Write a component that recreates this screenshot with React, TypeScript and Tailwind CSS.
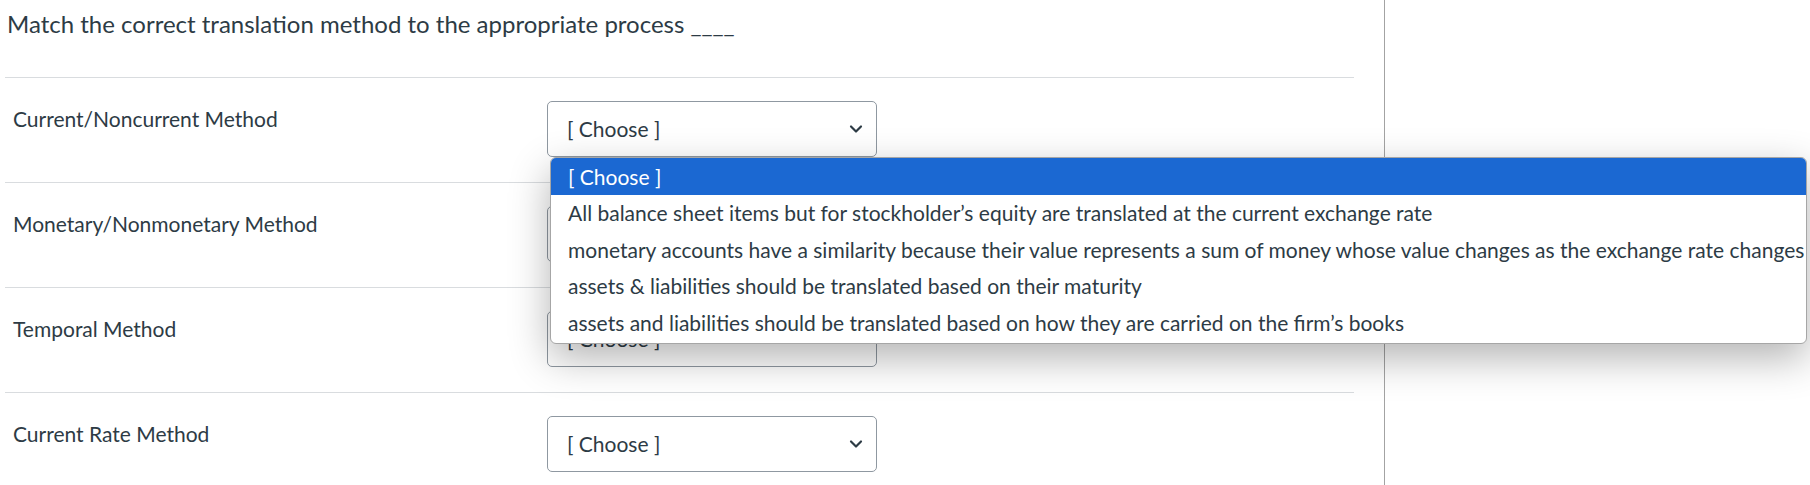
import { ChevronDown } from 'lucide-react'

const rows = [
  'Current/Noncurrent Method',
  'Monetary/Nonmonetary Method',
  'Temporal Method',
  'Current Rate Method',
]

const options = [
  '[ Choose ]',
  'All balance sheet items but for stockholder’s equity are translated at the current exchange rate',
  'monetary accounts have a similarity because their value represents a sum of money whose value changes as the exchange rate changes',
  'assets & liabilities should be translated based on their maturity',
  'assets and liabilities should be translated based on how they are carried on the firm’s books',
]

function FakeSelect({ open }: { open?: boolean }) {
  return (
    <div className="relative mt-[23px]">
      <div className="flex h-[56px] w-[330px] items-center justify-between rounded-[5px] border border-[#8f98a1] bg-white pl-[19px] pr-[10px] text-[21px] text-[#2d3b45]">
        <span>[ Choose ]</span>
        <ChevronDown className="h-[20px] w-[20px] text-[#2d3b45]" strokeWidth={2.6} />
      </div>

      {open && (
        <ul className="absolute left-[3px] top-[56px] z-10 w-[1257px] overflow-hidden rounded-[6px] border border-[#a6a6a6] bg-white pb-[2px] text-[21px] text-[#2d3b45] shadow-[0_14px_40px_rgba(0,0,0,0.3)]">
          {options.map((o, i) => (
            <li
              key={o}
              className={`flex h-[36.5px] items-center whitespace-nowrap pl-[17px] ${
                i === 0 ? 'bg-[#1b68d2] text-white' : ''
              }`}
            >
              {o}
            </li>
          ))}
        </ul>
      )}
    </div>
  )
}

export default function App() {
  return (
    <div className="h-[485px] overflow-hidden bg-white font-['Lato',sans-serif] text-[#2d3b45]">
      <div className="h-full w-[1385px] border-r border-[#a3a3a3]">
        <div className="pl-[5px] pr-[30px]">
          <h1 className="h-[77px] pl-[2px] pt-[8px] text-[24px] leading-[32px]">
            Match the correct translation method to the appropriate process ____
          </h1>

          {rows.map((label, i) => (
            <div key={label} className="flex h-[105px] items-start border-t border-[#d9dcdf]">
              <div className="w-[542px] pl-[8px] pt-[25px] text-[21px] leading-[32px]">{label}</div>
              <FakeSelect open={i === 0} />
            </div>
          ))}
        </div>
      </div>
    </div>
  )
}
